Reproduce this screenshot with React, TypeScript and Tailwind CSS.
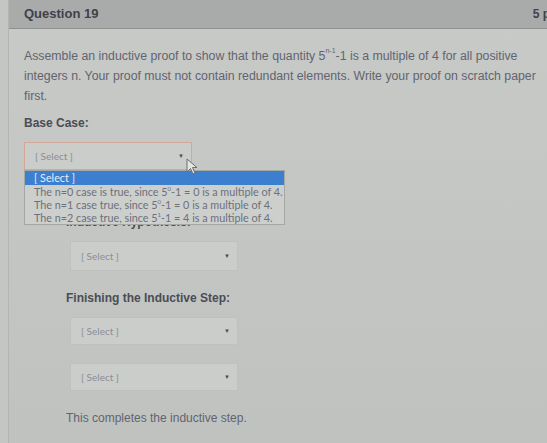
import React from 'react';

const Select: React.FC<{ className?: string; focused?: boolean }> = ({ className = '', focused }) => (
  <div
    className={`w-[168px] flex items-center justify-between pl-[10px] pr-[7px] bg-[#cbcdca] border ${
      focused ? 'border-[#d2a89a]' : 'border-[#bfc1be]'
    } ${className}`}
  >
    <span className="font-['Lato',sans-serif] text-[10px] text-[#8a8d98]">[ Select ]</span>
    <span className="text-[6px] text-[#4b4d55]">▼</span>
  </div>
);

const options = [
  { text: 'The n=0 case is true, since 5', sup: '0', rest: '-1 = 0 is a multiple of 4.' },
  { text: 'The n=1 case true, since 5', sup: '0', rest: '-1 = 0 is a multiple of 4.' },
  { text: 'The n=2 case true, since 5', sup: '1', rest: '-1 = 4 is a multiple of 4.' },
];

const App: React.FC = () => {
  return (
    <div className="w-[547px] h-[443px] overflow-hidden bg-[#c4c6c3] pl-[8px] font-['Liberation_Sans',Arial,sans-serif]">
      <div className="h-full border-l border-[#b3b5b2] bg-gradient-to-b from-[#c8cac7] to-[#c0c2bf]">
        {/* Header */}
        <div className="h-[29px] flex items-center justify-between pl-[15px] bg-[#a9abaa] border-b border-[#8f918f] overflow-hidden">
          <span className="text-[13px] font-bold text-[#3f414a]">Question 19</span>
          <span className="text-[12px] font-bold text-[#3f414a] -mr-[3px]">5 p</span>
        </div>

        {/* Body */}
        <div className="pl-[15px] pt-[17px]">
          <p className="text-[12.3px] leading-[20px] text-[#626470] w-[512px]">
            Assemble an inductive proof to show that the quantity 5
            <span className="inline-block align-top text-[7px] leading-[9px]">n-1</span>-1 is a multiple of 4 for all positive
            integers n. Your proof must not contain redundant elements. Write your proof on scratch paper first.
          </p>

          <div className="mt-[10px] text-[12px] font-bold text-[#4a4c56] leading-[14px]">Base Case:</div>

          <div className="relative mt-[12px]">
            <Select focused className="h-[28px]" />
            {/* open list */}
            <div className="absolute left-0 top-[28px] w-[261px] z-10 bg-[#cdcfcc] border border-[#a5a7a4] font-['Lato',sans-serif] text-[10.8px] leading-[13px] text-[#6c6f7c]">
              <div className="bg-[#3d7fcf] text-[#e8eefa] pl-[9px] h-[14px]">[ Select ]</div>
              {options.map((o, i) => (
                <div key={i} className="pl-[9px] h-[13px] whitespace-nowrap">
                  {o.text}
                  <span className="inline-block align-top text-[6px] leading-[7px]">{o.sup}</span>
                  {o.rest}
                </div>
              ))}
            </div>
            {/* cursor */}
            <svg className="absolute left-[162px] top-[16px] z-20" width="14" height="18" viewBox="0 0 14 18">
              <path d="M1 1 L1 14 L4.5 10.5 L7 16 L9 15 L6.5 9.5 L11 9.5 Z" fill="#e4e6e3" stroke="#6d6f6c" strokeWidth="1" />
            </svg>
          </div>

          <div className="pl-[42px]">
            <div className="mt-[45px] text-[12px] font-bold text-[#4a4c56] leading-[14px]">Inductive Hypothesis:</div>
            <Select className="mt-[12px] ml-[4px] h-[30px]" />
            <div className="mt-[20px] text-[12px] font-bold text-[#4a4c56] leading-[14px]">Finishing the Inductive Step:</div>
            <Select className="mt-[12px] ml-[4px] h-[28px]" />
            <Select className="mt-[18px] ml-[4px] h-[28px]" />
            <div className="mt-[20px] text-[12px] text-[#626470] leading-[14px]">This completes the inductive step.</div>
          </div>
        </div>
      </div>
    </div>
  );
};

export default App;
